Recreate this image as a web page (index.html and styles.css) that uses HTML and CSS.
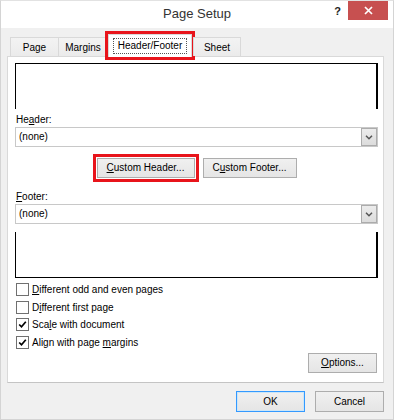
FILE: index.html
```html
<!DOCTYPE html>
<html>
<head>
<meta charset="utf-8">
<link rel="stylesheet" href="styles.css">
</head>
<body>
<div class="window">
  <div class="titlebar">
    <div class="title">Page Setup</div>
    <div class="help">?</div>
    <div class="close">
      <svg width="9" height="9" viewBox="0 0 9 9"><path d="M1 1 L8 8 M8 1 L1 8" stroke="#fff" stroke-width="1.7"/></svg>
    </div>
  </div>
  <div class="body">
    <div class="tabs">
      <div class="tab">Page</div>
      <div class="tab">Margins</div>
      <div class="tab selected"><span class="focus">Header/Footer</span></div>
      <div class="tab">Sheet</div>
    </div>
    <div class="panel">
      <div class="preview top"></div>
      <div class="label">He<u>a</u>der:</div>
      <div class="select"><span class="val">(none)</span><span class="arrow"><svg width="8" height="5" viewBox="0 0 8 5"><path d="M1 0.8 L4 3.8 L7 0.8" fill="none" stroke="#555" stroke-width="1.5"/></svg></span></div>
      <div class="btnrow">
        <div class="btn hl w1"><u>C</u>ustom Header...</div>
        <div class="btn w2">C<u>u</u>stom Footer...</div>
      </div>
      <div class="label"><u>F</u>ooter:</div>
      <div class="select"><span class="val">(none)</span><span class="arrow"><svg width="8" height="5" viewBox="0 0 8 5"><path d="M1 0.8 L4 3.8 L7 0.8" fill="none" stroke="#555" stroke-width="1.5"/></svg></span></div>
      <div class="preview bottom"></div>
      <div class="checks">
        <div class="check"><span class="box"></span><span><u>D</u>ifferent odd and even pages</span></div>
        <div class="check"><span class="box"></span><span>D<u>i</u>fferent first page</span></div>
        <div class="check"><span class="box"><svg width="9" height="9" viewBox="0 0 9 9"><path d="M1.2 4.5 L3.5 6.8 L7.8 1.8" fill="none" stroke="#000" stroke-width="1.7"/></svg></span><span>Sca<u>l</u>e with document</span></div>
        <div class="check"><span class="box"><svg width="9" height="9" viewBox="0 0 9 9"><path d="M1.2 4.5 L3.5 6.8 L7.8 1.8" fill="none" stroke="#000" stroke-width="1.7"/></svg></span><span>Align with page <u>m</u>argins</span></div>
      </div>
      <div class="optrow"><div class="btn w3"><u>O</u>ptions...</div></div>
    </div>
    <div class="footer">
      <div class="btn dlg default">OK</div>
      <div class="btn dlg">Cancel</div>
    </div>
  </div>
</div>
</body>
</html>
```
FILE: styles.css
```css
* { box-sizing: border-box; }
html, body { margin: 0; padding: 0; background: #fff; }
body { font-family: "Liberation Sans", Arial, sans-serif; font-size: 10px; color: #000; }
u { text-decoration: underline; text-underline-offset: 1px; }
.window {
  width: 394px; height: 420px;
  border-left: 1px solid #d4d4d4; border-right: 1px solid #d4d4d4; border-bottom: 1px solid #d4d4d4;
  border-top: 1px solid #e2e2e2;
  background: #f0f0f0;
  display: flex; flex-direction: column;
}
.titlebar {
  height: 27px; background: #fff; position: relative;
  display: flex; align-items: flex-start; justify-content: flex-end;
}
.title {
  position: absolute; left: 0; right: 0; top: 5px; text-align: center;
  font-size: 13px; color: #333; line-height: 16px;
}
.help { font-weight: bold; font-size: 11px; color: #222; margin-top: 3px; margin-right: 7px; line-height: 14px; }
.close {
  width: 40px; height: 19px; background: #c75050;
  display: flex; align-items: center; justify-content: center; margin-right: 5px;
}
.body { padding: 5px 9px 0 6px; display: flex; flex-direction: column; }
.tabs { display: flex; align-items: flex-end; height: 23px; padding-left: 3px; position: relative; z-index: 1; }
.tab {
  height: 19px; border: 1px solid #d9d9d9; border-bottom: none; margin-right: -1px;
  background: linear-gradient(#f3f3f3, #ebebeb);
  padding: 2px 0 0; text-align: center; line-height: 16px;
}
.tab:nth-child(1) { width: 49px; }
.tab:nth-child(2) { width: 50px; }
.tab:nth-child(4) { width: 48px; }
.tab.selected {
  width: 84px; height: 23px; background: #fff; margin: 0 1px -1px 1px;
  outline: 3px solid #e8141b; outline-offset: 0px;
  padding-top: 3px;
}
.focus { border: 1px dotted #555; padding: 0 4px; display: inline-block; line-height: 14px; }
.panel {
  width: 377px; height: 327px;
  background: #fff; border: 1px solid #d9d9d9; border-bottom-color: #c4c4c4;
  padding: 6px 5px 0 7px;
  display: flex; flex-direction: column;
}
.preview { height: 46px; border: 1px solid #000; }
.preview.top { border-bottom: none; border-right-width: 2px; }
.preview.bottom { border-top: none; margin-top: 8px; border-right-width: 2px; }
.label { margin-top: 3px; line-height: 15px; height: 15px; padding-left: 1px; }
.select {
  height: 20px; border: 1px solid #c8c8c8; display: flex; align-items: center; justify-content: space-between;
}
.val { padding-left: 3px; line-height: 16px; }
.arrow {
  width: 16px; height: 18px; background: linear-gradient(#ececec, #dcdcdc);
  border: 1px solid #acacac; margin-right: 0;
  display: flex; align-items: center; justify-content: center;
}
.btnrow { display: flex; justify-content: center; gap: 8px; margin-top: 11px; margin-bottom: 8px; }
.btn {
  height: 20px; border: 1px solid #adadad; background: linear-gradient(#f0f0f0, #e5e5e5);
  display: flex; align-items: center; justify-content: center; line-height: 16px;
}
.btn.hl { outline: 3px solid #e8141b; outline-offset: 1px; }
.w1 { width: 98px; }
.w2 { width: 94px; }
.w3 { width: 69px; }
.checks { margin-top: 3px; display: flex; flex-direction: column; }
.check { height: 17.5px; display: flex; align-items: center; gap: 3px; padding-left: 1px; }
.box {
  width: 13px; height: 13px; border: 1px solid #707070; background: #fff;
  display: flex; align-items: center; justify-content: center;
}
.optrow { display: flex; justify-content: flex-end; margin-top: 2px; padding-right: 1px; }
.footer { display: flex; justify-content: flex-end; gap: 10px; margin-top: 8px; padding-right: 0; }
.btn.dlg { width: 69px; height: 21px; }
.btn.default { border-color: #3399ff; box-shadow: inset 0 0 0 1px #cde6f7; }
```
